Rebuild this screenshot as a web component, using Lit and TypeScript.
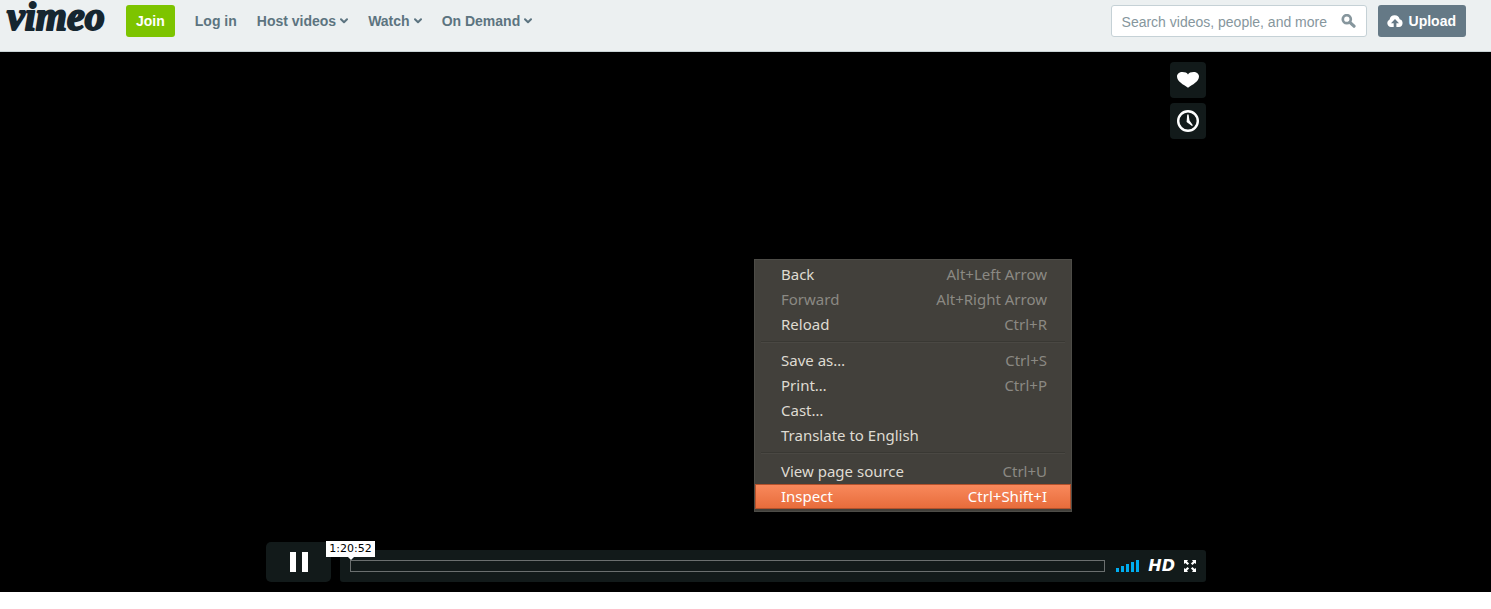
import { LitElement, html, css, nothing } from "lit";
import { customElement } from "lit/decorators.js";
import { classMap } from "lit/directives/class-map.js";

interface MenuEntry {
  label: string;
  keys?: string;
  state?: "disabled" | "active";
}

const MENU: MenuEntry[][] = [
  [
    { label: "Back", keys: "Alt+Left Arrow" },
    { label: "Forward", keys: "Alt+Right Arrow", state: "disabled" },
    { label: "Reload", keys: "Ctrl+R" },
  ],
  [
    { label: "Save as…", keys: "Ctrl+S" },
    { label: "Print…", keys: "Ctrl+P" },
    { label: "Cast…" },
    { label: "Translate to English" },
  ],
  [
    { label: "View page source", keys: "Ctrl+U" },
    { label: "Inspect", keys: "Ctrl+Shift+I", state: "active" },
  ],
];

@customElement("site-header")
class SiteHeader extends LitElement {
  static styles = css`
    :host {
      display: block;
      font: bold 14px/32px "Liberation Sans", Arial, sans-serif;
    }
    * { box-sizing: border-box; }
    .bar {
      display: flex;
      align-items: center;
      justify-content: space-between;
      padding: 5px 25px 14px 6px;
      background: #ecf0f1;
      border-bottom: 1px solid #c9d3d6;
    }
    .group, .nav { display: flex; align-items: center; }
    .nav { gap: 20px; }
    .logo {
      width: 100px;
      height: 32px;
      margin-right: 20px;
      display: block;
    }
    .logo svg { display: block; overflow: visible; }
    .word {
      font: italic bold 40px "Liberation Serif", "Times New Roman", serif;
      fill: #162630;
      stroke: #162630;
      stroke-width: 2px;
      stroke-linejoin: round;
    }
    a { color: #5c7480; text-decoration: none; white-space: nowrap; }
    button {
      font: inherit;
      height: 32px;
      border: 0;
      border-radius: 3px;
      color: #fff;
      padding: 0 10px;
      white-space: nowrap;
    }
    .join { background: #7dc400; }
    .more { display: flex; align-items: center; gap: 4px; }
    .search {
      display: flex;
      align-items: center;
      width: 256px;
      height: 32px;
      margin-right: 11px;
      padding: 0 10px;
      background: #fff;
      border: 1px solid #c5d1d6;
      border-radius: 3px;
    }
    .search input {
      flex: 1;
      min-width: 0;
      height: 30px;
      padding: 1px 0 0;
      border: 0;
      outline: 0;
      background: none;
      font: 14px "Liberation Sans", Arial, sans-serif;
      color: #38454d;
    }
    .search input::placeholder { color: #86969d; opacity: 1; }
    .upload { display: flex; align-items: center; gap: 6px; padding: 0 10px 0 9px; background: #657986; }
  `;

  private dropdown(label: string) {
    return html`<a class="more" href="#">${label}
      <svg width="8" height="6" viewBox="0 0 8 6" aria-hidden="true">
        <path d="M1 1.2 4 4.2 7 1.2" fill="none" stroke="#5c7480" stroke-width="2" stroke-linecap="round" stroke-linejoin="round" />
      </svg></a>`;
  }

  render() {
    return html`
      <header class="bar">
        <div class="group">
          <a class="logo" href="#" aria-label="Vimeo">
            <svg width="100" height="32" viewBox="0 0 100 32"><text class="word" x="1" y="25">vimeo</text></svg>
          </a>
          <nav class="nav">
            <button class="join">Join</button>
            <a href="#">Log in</a>
            ${this.dropdown("Host videos")}${this.dropdown("Watch")}${this.dropdown("On Demand")}
          </nav>
        </div>
        <div class="group">
          <label class="search">
            <input type="text" aria-label="Search" placeholder="Search videos, people, and more" />
            <svg width="15" height="15" viewBox="0 0 15 15" aria-hidden="true">
              <circle cx="5.8" cy="5.2" r="4" fill="none" stroke="#86969d" stroke-width="2.7" />
              <path d="M8.9 8.3 13 12.2" stroke="#86969d" stroke-width="3.2" stroke-linecap="round" />
            </svg>
          </label>
          <button class="upload">
            <svg width="16" height="12" viewBox="0 0 16 12" aria-hidden="true">
              <path fill="#fff" d="M4 12A4 4 0 0 1 2.6 4.4 A5.2 5.2 0 0 1 12.7 4.2 A4 4 0 0 1 12 12H9.4V8.2H12L8 4 4 8.2H6.7V12Z" />
            </svg>
            Upload
          </button>
        </div>
      </header>`;
  }
}

@customElement("context-menu")
class ContextMenu extends LitElement {
  static styles = css`
    :host {
      display: block;
      width: 318px;
      box-sizing: border-box;
      padding: 2px 0;
      border: 1px solid #4d4c47;
      background: #42403b;
      font: 15px/25px "Noto Sans", "Open Sans", sans-serif;
    }
    button {
      display: flex;
      justify-content: space-between;
      box-sizing: border-box;
      width: 100%;
      height: 25px;
      padding: 0 24px 0 26px;
      border: 0;
      background: none;
      color: #dfdbd2;
      font: inherit;
      text-align: left;
    }
    .keys { color: #8b8983; }
    .disabled { color: #8b8983; }
    .active {
      color: #fff;
      background: linear-gradient(#f98a5d, #e76b3a);
      box-shadow: inset 0 0 0 1px #b4522c;
    }
    .active .keys { color: #fff; }
    hr {
      height: 1px;
      margin: 4px 6px 5px;
      border: 0;
      border-top: 1px solid #393833;
      background: #4a4843;
    }
  `;

  render() {
    return MENU.map(
      (section, i) => html`
        ${i ? html`<hr />` : nothing}
        ${section.map(
          (m) => html`<button
            class=${classMap({ disabled: m.state === "disabled", active: m.state === "active" })}
            ?disabled=${m.state === "disabled"}
          ><span>${m.label}</span>${m.keys ? html`<span class="keys">${m.keys}</span>` : nothing}</button>`
        )}`
    );
  }
}

@customElement("video-player")
class VideoPlayer extends LitElement {
  static styles = css`
    :host { display: block; background: #000; padding: 10px 19px 10px 0; }
    * { box-sizing: border-box; }
    .frame {
      display: flex;
      flex-direction: column;
      justify-content: space-between;
      max-width: 940px;
      min-height: 520px;
      margin: 0 auto;
    }
    button { display: flex; align-items: center; justify-content: center; padding: 0; border: 0; background: none; }
    .side { display: flex; flex-direction: column; align-items: flex-end; gap: 5px; }
    .side button { width: 36px; height: 36px; border-radius: 4px; background: #121a1a; }
    .controls { display: flex; align-items: flex-end; gap: 9px; }
    .play { width: 65px; height: 40px; border-radius: 5px; background: #121a1a; }
    .strip {
      flex: 1;
      display: flex;
      align-items: center;
      height: 32px;
      padding: 0 10px;
      border-radius: 3px;
      background: #121a1a;
    }
    .track { position: relative; flex: 1; height: 12px; margin-right: 11px; border: 1px solid #6a6f6f; }
    .time {
      position: absolute;
      left: -25px;
      bottom: 14px;
      width: 49px;
      background: #fff;
      color: #000;
      font: 11px/16px "DejaVu Sans", Verdana, sans-serif;
      text-align: center;
    }
    .time::after {
      content: "";
      position: absolute;
      top: 16px;
      left: 22px;
      border: 3px solid transparent;
      border-top-color: #fff;
      border-bottom: 0;
    }
    .hd { margin: 0 9px; color: #fff; font: italic bold 16px/18px "DejaVu Sans", Verdana, sans-serif; }
  `;

  render() {
    return html`
      <div class="frame">
        <div class="side">
          <button aria-label="Like">
            <svg width="22" height="16" viewBox="0 0 22 16">
              <path fill="#fff" d="M11 15.8C6.5 12.8 0 9.5 0 4.6 0 1.8 2.4 0 5.4 0 8 0 10 .8 11 2.4 12 .8 14 0 16.6 0 19.6 0 22 1.8 22 4.6 22 9.5 15.5 12.8 11 15.8Z" />
            </svg>
          </button>
          <button aria-label="Watch later">
            <svg width="22" height="22" viewBox="0 0 22 22">
              <circle cx="11" cy="11" r="9.8" fill="none" stroke="#fff" stroke-width="2.4" />
              <path fill="#fff" d="M10.2 4.4h1.4l.9 6.2 3.4 4.6-.9.9L9.6 12Z" />
            </svg>
          </button>
        </div>
        <div class="controls">
          <button class="play" aria-label="Pause">
            <svg width="18" height="20" viewBox="0 0 18 20"><path fill="#fff" d="M0 0h6v20H0zM12 0h6v20h-6z" /></svg>
          </button>
          <div class="strip">
            <div class="track"><span class="time">1:20:52</span></div>
            <button aria-label="Volume">
              <svg width="23" height="12" viewBox="0 0 23 12">
                <path fill="#00adef" d="M0 8h3v4H0zM5 6h3v6H5zM10 4h3v8h-3zM15 2h3v10h-3zM20 0h3v12h-3z" />
              </svg>
            </button>
            <button class="hd">HD</button>
            <button aria-label="Full screen">
              <svg width="12" height="12" viewBox="0 0 12 12">
                <path fill="#fff" d="M0 0h4L3 1.4 5.1 3.5 3.5 5.1 1.4 3 0 4zM12 0v4L10.6 3 8.5 5.1 6.9 3.5 9 1.4 8 0zM0 12V8l1.4 1 2.1-2.1 1.6 1.6L3 10.6 4 12zM12 12H8l1-1.4-2.1-2.1 1.6-1.6L10.6 9 12 8z" />
              </svg>
            </button>
          </div>
        </div>
      </div>`;
  }
}

@customElement("app-root")
class AppRoot extends LitElement {
  static styles = css`
    :host { display: block; position: relative; background: #fff; }
    .menu { position: absolute; left: 754px; top: 259px; }
  `;

  render() {
    return html`
      <site-header></site-header>
      <video-player></video-player>
      <context-menu class="menu"></context-menu>`;
  }
}
